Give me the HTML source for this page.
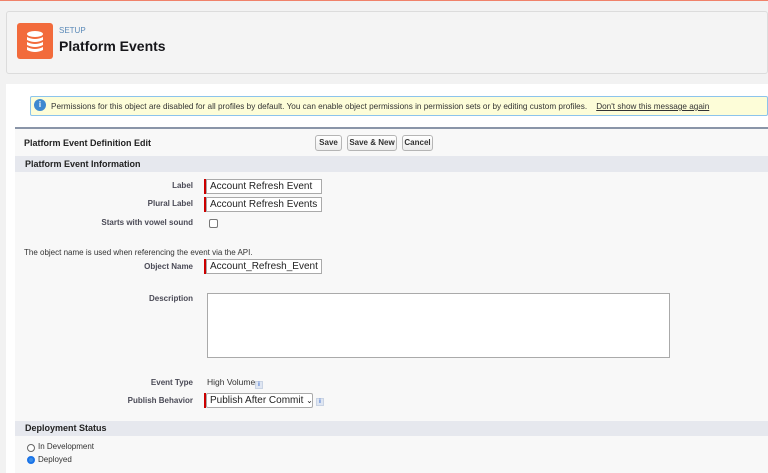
<!DOCTYPE html>
<html><head><style>
*{margin:0;padding:0;box-sizing:border-box}
body{width:768px;height:473px;overflow:hidden;background:#f2f2f2;font-family:"Liberation Sans",Arial,sans-serif;position:relative;color:#222}
.a{position:absolute}
.lbl{position:absolute;font-size:8px;font-weight:bold;color:#4a4a56;text-align:right;width:190px;left:3px}
.inp{position:absolute;height:15px;border:1px solid #aaa;background:#fff;font-size:10px;padding-left:3px;line-height:13px;color:#222;white-space:nowrap;overflow:hidden}
.req{position:absolute;width:2px;height:15px;background:#c00}
.btn{position:absolute;top:135px;height:16px;border:1px solid #b5b5b5;border-radius:3px;background:linear-gradient(#fff,#ececec);font-size:8px;font-weight:bold;color:#333;line-height:14px;text-align:center}
.sec{position:absolute;left:15px;width:753px;background:#e6e8ee;font-size:9px;font-weight:bold;color:#222;padding-left:10px}
.ii{position:absolute;width:8px;height:8px;background:#dfe6f2;border:1px solid #c9d3e3;font-size:6px;color:#36c;text-align:center;line-height:7px;font-weight:bold}
</style></head><body>
<div class="a" style="left:0;top:0;width:768px;height:1px;background:#f0826a"></div>
<div class="a" style="left:6px;top:11px;width:762px;height:63px;background:#f4f4f4;border:1px solid #dcdcdc;border-radius:3px"></div>
<div class="a" style="left:17px;top:23px;width:36px;height:36px;background:#f26b3c;border-radius:3px">
<svg width="36" height="36" viewBox="0 0 36 36"><g fill="#fff"><ellipse cx="18" cy="11" rx="8" ry="3"/><path d="M10 14q8 4 16 0v3q-8 4-16 0z"/><path d="M10 19q8 4 16 0v3q-8 4-16 0z"/><path d="M10 24q8 4 16 0v3q-8 4-16 0z"/></g></svg></div>
<div class="a" style="left:59px;top:26px;font-size:8px;color:#5b8ab8">SETUP</div>
<div class="a" style="left:59px;top:38px;font-size:14px;font-weight:bold;color:#16161a">Platform Events</div>
<div class="a" style="left:6px;top:84px;width:762px;height:389px;background:#fff"></div>
<div class="a" style="left:30px;top:96px;width:738px;height:20px;background:#fdfdd8;border:1px solid #8cc4ec;border-radius:2px"></div>
<div class="a" style="left:34px;top:99px;width:12px;height:12px;border-radius:50%;background:#3e89d0;color:#fff;font-size:8px;font-weight:bold;text-align:center;line-height:12px">i</div>
<div class="a" style="left:51px;top:102px;font-size:8.2px;color:#333;white-space:nowrap">Permissions for this object are disabled for all profiles by default. You can enable object permissions in permission sets or by editing custom profiles.&nbsp;&nbsp;&nbsp;&nbsp;<span style="text-decoration:underline">Don't show this message again</span></div>
<div class="a" style="left:15px;top:127px;width:753px;height:346px;background:#f8f8f8;border-top:2px solid #8a95a8"></div>
<div class="a" style="left:24px;top:138px;font-size:9px;font-weight:bold;color:#222">Platform Event Definition Edit</div>
<div class="btn" style="left:315px;width:27px">Save</div>
<div class="btn" style="left:347px;width:50px">Save &amp; New</div>
<div class="btn" style="left:402px;width:31px">Cancel</div>
<div class="sec" style="top:156px;height:16px;line-height:16px">Platform Event Information</div>
<div class="lbl" style="top:181px">Label</div>
<div class="req" style="left:204px;top:179px"></div><div class="inp" style="left:206px;top:179px;width:116px">Account Refresh Event</div>
<div class="lbl" style="top:199px">Plural Label</div>
<div class="req" style="left:204px;top:197px"></div><div class="inp" style="left:206px;top:197px;width:116px">Account Refresh Events</div>
<div class="lbl" style="top:218px">Starts with vowel sound</div>
<div class="a" style="left:209px;top:219px;width:9px;height:9px;border:1px solid #777;border-radius:2px;background:#fff"></div>
<div class="a" style="left:24px;top:248px;font-size:8px;color:#333">The object name is used when referencing the event via the API.</div>
<div class="lbl" style="top:262px">Object Name</div>
<div class="req" style="left:204px;top:259px"></div><div class="inp" style="left:206px;top:259px;width:116px">Account_Refresh_Event</div>
<div class="lbl" style="top:294px">Description</div>
<div class="a" style="left:207px;top:293px;width:463px;height:65px;background:#fff;border:1px solid #aaa"></div>
<div class="lbl" style="top:378px">Event Type</div>
<div class="a" style="left:207px;top:377px;font-size:8.5px;color:#333">High Volume</div>
<div class="ii" style="left:255px;top:381px">i</div>
<div class="lbl" style="top:396px">Publish Behavior</div>
<div class="req" style="left:204px;top:393px"></div>
<div class="inp" style="left:206px;top:393px;width:107px;border-radius:2px">Publish After Commit <span style="font-size:8px">&#x2304;</span></div>
<div class="ii" style="left:316px;top:398px">i</div>
<div class="sec" style="top:421px;height:15px;line-height:15px">Deployment Status</div>
<div class="a" style="left:27px;top:444px;width:8px;height:8px;border:1px solid #666;border-radius:50%;background:#fff"></div>
<div class="a" style="left:38px;top:442px;font-size:8px;color:#333">In Development</div>
<div class="a" style="left:27px;top:456px;width:8px;height:8px;border:2px solid #1a73e8;border-radius:50%;background:#3a8de8"></div>
<div class="a" style="left:38px;top:455px;font-size:8px;color:#333">Deployed</div>
</body></html>
